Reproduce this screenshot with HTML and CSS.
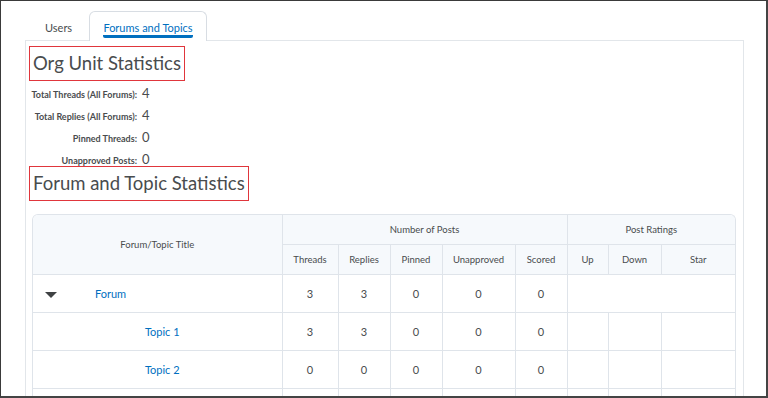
FILE: index.html
```html
<!DOCTYPE html>
<html lang="en">
<head>
    <meta charset="UTF-8">
    <meta name="viewport" content="width=device-width, initial-scale=1.0">
    <title>Statistics</title>
    <link rel="stylesheet" href="styles.css">
</head>
<body>

    <div class="frame">
        <div class="tabs">
            <div class="tab">Users</div>
            <div class="tab active"><span>Forums and Topics</span></div>
        </div>

        <div class="panel">
            <div class="red-box">
                <h1>Org Unit Statistics</h1>
            </div>

            <dl class="stats">
                <dt>Total Threads (All Forums):</dt><dd>4</dd>
                <dt>Total Replies (All Forums):</dt><dd>4</dd>
                <dt>Pinned Threads:</dt><dd>0</dd>
                <dt>Unapproved Posts:</dt><dd>0</dd>
            </dl>

            <div class="red-box">
                <h1>Forum and Topic Statistics</h1>
            </div>

            <div class="table-wrap">
                <table>
                    <colgroup>
                        <col style="width:249px">
                        <col style="width:56px">
                        <col style="width:52px">
                        <col style="width:52px">
                        <col style="width:73px">
                        <col style="width:52px">
                        <col style="width:41px">
                        <col style="width:53px">
                        <col style="width:74px">
                    </colgroup>
                    <thead>
                        <tr class="head-1">
                            <th rowspan="2">Forum/Topic Title</th>
                            <th colspan="5">Number of Posts</th>
                            <th colspan="3">Post Ratings</th>
                        </tr>
                        <tr class="head-2">
                            <th>Threads</th>
                            <th>Replies</th>
                            <th>Pinned</th>
                            <th>Unapproved</th>
                            <th>Scored</th>
                            <th>Up</th>
                            <th>Down</th>
                            <th>Star</th>
                        </tr>
                    </thead>
                    <tbody>
                        <tr>
                            <td class="forum-cell"><span class="caret"></span><a href="#">Forum</a></td>
                            <td>3</td>
                            <td>3</td>
                            <td>0</td>
                            <td>0</td>
                            <td>0</td>
                            <td colspan="3"></td>
                        </tr>
                        <tr>
                            <td class="topic-cell"><a href="#">Topic 1</a></td>
                            <td>3</td>
                            <td>3</td>
                            <td>0</td>
                            <td>0</td>
                            <td>0</td>
                            <td></td>
                            <td></td>
                            <td></td>
                        </tr>
                        <tr>
                            <td class="topic-cell"><a href="#">Topic 2</a></td>
                            <td>0</td>
                            <td>0</td>
                            <td>0</td>
                            <td>0</td>
                            <td>0</td>
                            <td></td>
                            <td></td>
                            <td></td>
                        </tr>
                        <tr>
                            <td></td>
                            <td></td>
                            <td></td>
                            <td></td>
                            <td></td>
                            <td></td>
                            <td></td>
                            <td></td>
                            <td></td>
                        </tr>
                    </tbody>
                </table>
            </div>
        </div>
    </div>

</body>
</html>
```

FILE: styles.css
```css
* {
    box-sizing: border-box;
}
body {
    font-family: 'Lato', 'Liberation Sans', sans-serif;
    background-color: #ffffff;
    color: #494c4e;
    margin: 0;
    padding: 0;
}
.frame {
    width: 768px;
    height: 398px;
    overflow: hidden;
    border-top: 1px solid #3a3a3a;
    border-left: 1px solid #3a3a3a;
    border-right: 2px solid #444;
    border-bottom: 2px solid #444;
    background-color: #fff;
}
.tabs {
    display: flex;
    padding: 10px 0 0 25px;
    height: 40px;
}
.tab {
    font-size: 11px;
    white-space: nowrap;
    width: 63px;
    padding: 10px 0 0 19px;
    color: #494c4e;
}
.tab.active {
    width: 118px;
    height: 30px;
    border: 1px solid #d8dde3;
    border-bottom: none;
    border-radius: 6px 6px 0 0;
    background-color: #fff;
    color: #006fbf;
    padding: 9px 0 0 0;
    text-align: center;
    position: relative;
    z-index: 1;
}
.tab.active span {
    display: inline-block;
    padding-bottom: 1px;
    border-bottom: 3px solid #006fbf;
    border-radius: 2px;
}
.panel {
    margin-left: 24px;
    width: 719px;
    border: 1px solid #e2e6ea;
    border-bottom: none;
    margin-top: -1px;
    padding: 5px 0 0 3px;
    height: 400px;
}
.red-box {
    display: inline-block;
    border: 1px solid #e0363c;
    padding: 0 3px;
    height: 35px;
}
h1 {
    font-size: 18.5px;
    font-weight: normal;
    margin: 0;
    line-height: 33px;
    color: #494c4e;
}
.stats {
    display: grid;
    grid-template-columns: 108px auto;
    column-gap: 5px;
    margin: 2px 0 -5px 0;
    align-items: baseline;
}
.stats dt {
    font-size: 9px;
    font-weight: bold;
    text-align: right;
    line-height: 21px;
}
.stats dd {
    margin: 0;
    font-size: 13px;
    line-height: 21px;
}
.table-wrap {
    margin: 13px 0 0 3px;
    width: 704px;
    border: 1px solid #dfe4ea;
    border-bottom: none;
    border-radius: 6px 6px 0 0;
    overflow: hidden;
}
table {
    width: 702px;
    table-layout: fixed;
    border-collapse: collapse;
}
th, td {
    border-right: 1px solid #dfe4ea;
    border-bottom: 1px solid #dfe4ea;
    text-align: center;
    padding: 0;
    color: #494c4e;
}
th:last-child, td:last-child {
    border-right: none;
}
th {
    font-size: 9.5px;
    font-weight: normal;
    background-color: #f6f9fc;
}
.head-1 th {
    height: 29px;
}
.head-2 th {
    height: 30px;
}
.head-1 th:first-child {
    border-right: 1px solid #dfe4ea;
}
td {
    height: 38px;
    font-size: 11px;
}
a {
    color: #006fbf;
    text-decoration: none;
}
.forum-cell {
    text-align: left;
    padding-left: 12px;
}
.caret {
    display: inline-block;
    width: 0;
    height: 0;
    border-left: 6px solid transparent;
    border-right: 6px solid transparent;
    border-top: 6px solid #3f4244;
    margin-right: 38px;
    vertical-align: middle;
}
.topic-cell {
    padding-left: 10px;
}
```
